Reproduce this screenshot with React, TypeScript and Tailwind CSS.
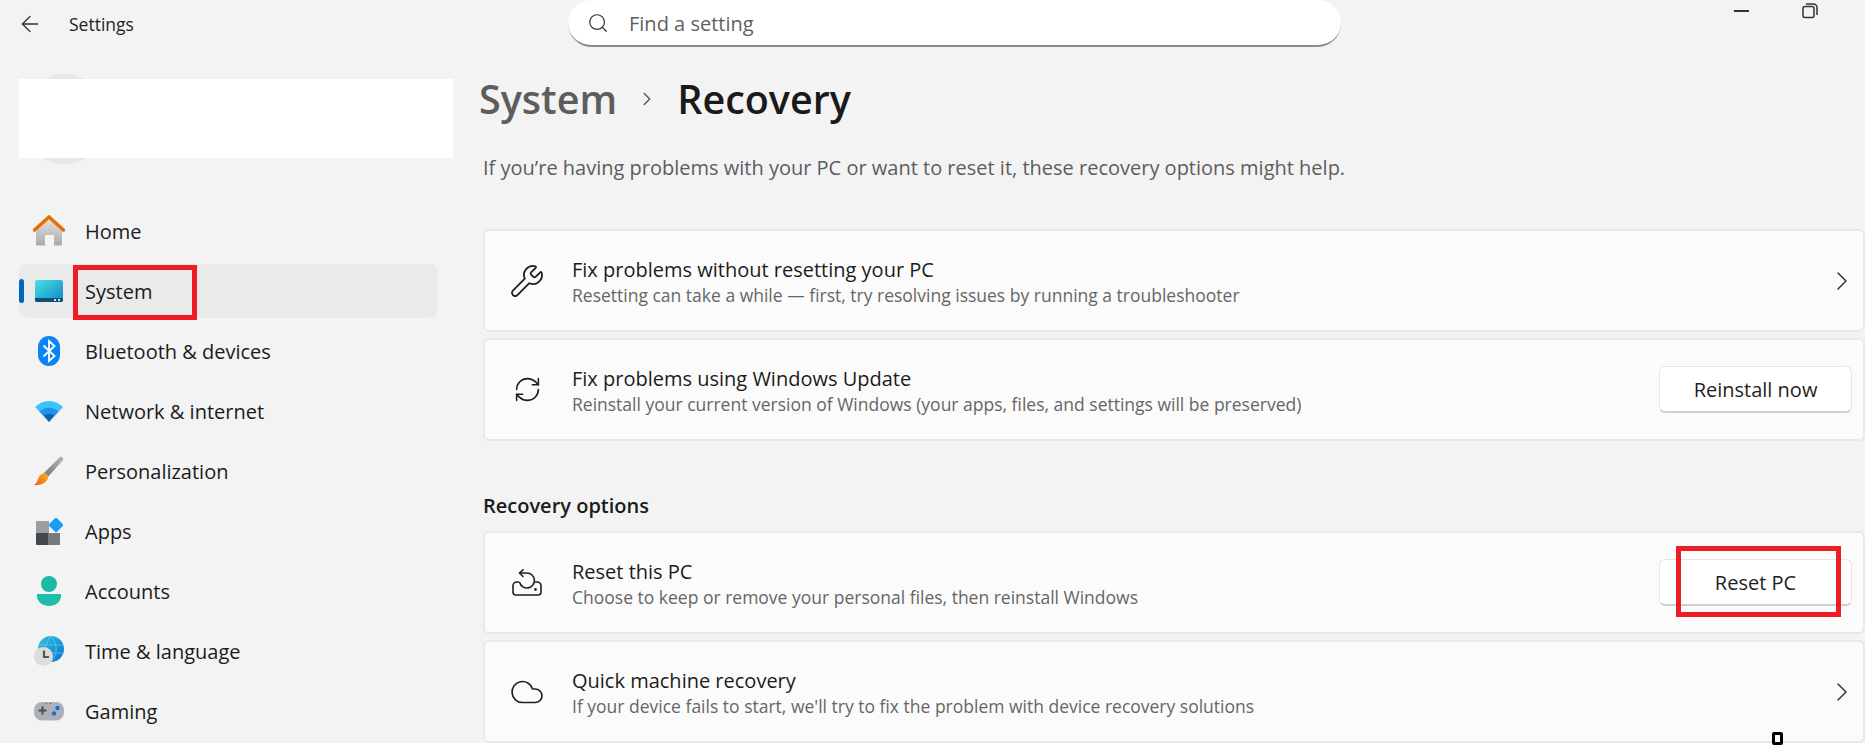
import { ArrowLeft, ChevronRight, Cloud, RefreshCw, Search, Wrench } from 'lucide-react';
import type { ReactNode } from 'react';

function HomeIcon() {
  return (
    <svg width="32" height="32" viewBox="0 0 32 32">
      <defs>
        <linearGradient id="homeWall" x1="0" y1="0" x2="0" y2="1"><stop offset="0" stopColor="#e2e2e2" /><stop offset="1" stopColor="#a9a9a9" /></linearGradient>
      </defs>
      <path d="M3 14 16 4l13 10v15a1.500 1.500 0 0 1-1.500 1.500H21V20h-9v10.500H4.500A1.500 1.500 0 0 1 3 29Z" fill="url(#homeWall)" />
      <path d="M1.500 15 16 2l14.500 13" fill="none" stroke="#e96f00" strokeWidth="3.600" strokeLinejoin="round" strokeLinecap="round" />
    </svg>
  );
}

function SystemIcon() {
  return (
    <svg width="30" height="24" viewBox="0 0 30 24">
      <defs>
        <linearGradient id="sysScreen" x1="0" y1="0" x2="1" y2="1"><stop offset="0" stopColor="#46e3e8" /><stop offset="1" stopColor="#1283c4" /></linearGradient>
      </defs>
      <rect x="1" y="1" width="28" height="22" rx="2" fill="url(#sysScreen)" />
      <path d="M1 19h28v2a2 2 0 0 1-2 2H3a2 2 0 0 1-2-2Z" fill="#0e4f78" />
      <rect x="20" y="20" width="2" height="2" fill="#cde6f2" />
      <rect x="24" y="20" width="2" height="2" fill="#cde6f2" />
    </svg>
  );
}

function BluetoothIcon() {
  return (
    <svg width="22" height="30" viewBox="0 0 22 30">
      <rect x="0" y="0" width="22" height="30" rx="11" fill="#0a84f5" />
      <path d="m5.500 9.500 11 10.500-5.500 5V5l5.500 5-11 10.500" fill="none" stroke="#fff" strokeWidth="1.800" />
    </svg>
  );
}

function WifiIcon() {
  return (
    <svg width="30" height="22" viewBox="0 0 30 22">
      <path d="M1 7C9-1 21-1 29 7L15 22Z" fill="#3cc3fb" />
      <path d="M5.500 11.500c6-5 13-5 19 0L15 22Z" fill="#1e93e6" />
      <path d="M10 15.500c3-2 7-2 10 0L15 21.500Z" fill="#0f5fb0" />
    </svg>
  );
}

function BrushIcon() {
  return (
    <svg width="30" height="30" viewBox="0 0 30 30">
      <defs>
        <linearGradient id="brushHandle" x1="0" y1="1" x2="1" y2="0"><stop offset="0" stopColor="#6d7378" /><stop offset="1" stopColor="#b5b9bd" /></linearGradient>
        <linearGradient id="brushTip" x1="1" y1="0" x2="0" y2="1"><stop offset="0" stopColor="#fbb01c" /><stop offset="1" stopColor="#ee5f12" /></linearGradient>
      </defs>
      <path d="M26 1c2-1 4 1 3 3L13 22l-4-4Z" fill="url(#brushHandle)" />
      <path d="M8 18c3-2 6 0 6 3 0 5-7 9-14 8 3-2 3-4 4-6 1-3 2-4 4-5Z" fill="url(#brushTip)" />
    </svg>
  );
}

function AppsIcon() {
  return (
    <svg width="28" height="28" viewBox="0 0 28 28">
      <path d="M1 5a1 1 0 0 1 1-1h12v12H1Z" fill="#9a9ea3" />
      <path d="M1 16h12v12H2a1 1 0 0 1-1-1Z" fill="#45484b" />
      <path d="M13 16h12v11a1 1 0 0 1-1 1H13Z" fill="#777b80" />
      <rect x="15.500" y="2.500" width="11" height="11" rx="1.500" transform="rotate(45 21 8)" fill="#1c9bf0" />
    </svg>
  );
}

function AccountsIcon() {
  return (
    <svg width="26" height="30" viewBox="0 0 26 30">
      <circle cx="13" cy="8" r="8" fill="#1cb9a5" />
      <path d="M1 18h24v2c0 6-6 10-12 10S1 26 1 20Z" fill="#1fbda9" />
    </svg>
  );
}

function TimeIcon() {
  return (
    <svg width="30" height="30" viewBox="0 0 30 30">
      <defs>
        <linearGradient id="globeFill" x1="0" y1="0" x2="1" y2="1"><stop offset="0" stopColor="#2cc4dc" /><stop offset="1" stopColor="#0d74d1" /></linearGradient>
      </defs>
      <circle cx="17" cy="13" r="13" fill="url(#globeFill)" />
      <path d="M5 9h24M5 17h24M17 0c-7 8-7 18 0 26M17 0c7 8 7 18 0 26" fill="none" stroke="#7fd9ee" strokeWidth="0.800" opacity="0.700" />
      <circle cx="9.500" cy="20.500" r="9.500" fill="#dcdcdc" />
      <path d="M10 14.500v6.500h5" fill="none" stroke="#55585b" strokeWidth="2.200" />
    </svg>
  );
}

function GamingIcon() {
  return (
    <svg width="30" height="20" viewBox="0 0 30 20">
      <rect x="0" y="1" width="30" height="18.500" rx="8" fill="#adb1b7" />
      <path d="M8.500 5.500v8M4.500 9.500h8" stroke="#4b4e52" strokeWidth="2" />
      <circle cx="23.500" cy="7" r="2.200" fill="#0f74dc" />
      <circle cx="20" cy="12.500" r="2.200" fill="#0f74dc" />
      <rect x="12" y="2" width="1" height="1" fill="#55585b" />
      <rect x="16" y="2" width="1" height="1" fill="#55585b" />
    </svg>
  );
}

function ResetIcon() {
  return (
    <svg width="30" height="28" viewBox="0 0 30 28" fill="none" stroke="#1f1f1f" strokeWidth="1.600" strokeLinecap="round" strokeLinejoin="round">
      <path d="M6.500 13H5a4 4 0 0 0-4 4v6a3 3 0 0 0 3 3h22a3 3 0 0 0 3-3v-6a4 4 0 0 0-4-4h-1.500" />
      <path d="M8 4h7a7.500 7.500 0 1 1-7.300 9.500" />
      <path d="M11 0.800 7.500 4l3.500 3.500" />
      <circle cx="23.500" cy="20.500" r="0.600" fill="#1f1f1f" />
    </svg>
  );
}

const NAV_ITEMS: { label: string; icon: ReactNode; active?: boolean }[] = [
  { label: 'Home', icon: <HomeIcon /> },
  { label: 'System', icon: <SystemIcon />, active: true },
  { label: 'Bluetooth & devices', icon: <BluetoothIcon /> },
  { label: 'Network & internet', icon: <WifiIcon /> },
  { label: 'Personalization', icon: <BrushIcon /> },
  { label: 'Apps', icon: <AppsIcon /> },
  { label: 'Accounts', icon: <AccountsIcon /> },
  { label: 'Time & language', icon: <TimeIcon /> },
  { label: 'Gaming', icon: <GamingIcon /> },
];

function Card({ icon, title, desc, action }: { icon: ReactNode; title: string; desc: string; action: ReactNode }) {
  return (
    <div className="flex h-[103px] w-[1382px] items-center rounded-md border-2 border-[#e8e8e8] bg-[#fbfbfb] pr-[11px]">
      <div className="mr-[3px] flex w-[84px] shrink-0 justify-center text-[#1f1f1f]">{icon}</div>
      <div className="min-w-0 flex-1 pt-[2px]">
        <div className="text-[20px] leading-[27px] text-[#1b1b1b]">{title}</div>
        <div className="text-[17.500px] leading-[24px] text-[#666666]">{desc}</div>
      </div>
      {action}
    </div>
  );
}

function CardButton({ children }: { children: ReactNode }) {
  return (
    <button className="h-[47px] w-[193px] rounded-md border border-[#e6e6e6] border-b-[2px] border-b-[#cfcfcf] bg-white pt-[2px] text-[20px] text-[#1f1f1f]">
      {children}
    </button>
  );
}

const chevron = <ChevronRight size={32} strokeWidth={1.100} className="mr-[-6px] text-[#333333]" />;

export default function App() {
  return (
    <div className="relative h-[747px] w-[1865px] overflow-hidden bg-white font-['Open_Sans','Noto_Sans',sans-serif]">
      <div className="flex h-[743px] flex-col bg-[#f3f3f3]">
        {/* title bar */}
        <div className="relative flex h-[48px] shrink-0">
          <div className="flex w-[568px] shrink-0 items-center pl-[17px]">
            <ArrowLeft size={26} strokeWidth={1.200} className="text-[#333333]" />
            <span className="ml-[26px] text-[17.500px] text-[#1f1f1f]">Settings</span>
          </div>
          <div className="flex h-[47px] w-[773px] items-center rounded-full border-b-[2px] border-b-[#8a8a8a] bg-white pl-[19px]">
            <Search size={22} strokeWidth={1.300} className="text-[#333333]" />
            <span className="mt-[2px] ml-[20px] text-[20px] text-[#5f5f5f]">Find a setting</span>
          </div>
          <div className="ml-auto flex items-start pt-[3px] pr-[47px]">
            <div className="mt-[7px] h-[2px] w-[15px] bg-[#333333]" />
            <svg width="16" height="16" viewBox="0 0 16 16" fill="none" stroke="#333333" strokeWidth="1.500" className="ml-[53px]">
              <rect x="1" y="3.500" width="11" height="11" rx="2" />
              <path d="M4 1h7.500A3.500 3.500 0 0 1 15 4.500V12" />
            </svg>
          </div>
        </div>

        <div className="flex min-h-0 flex-1">
          {/* sidebar */}
          <aside className="relative w-[479px] shrink-0 pl-[19px]">
            <div className="absolute top-[26px] left-[20px] h-[90px] w-[90px] rounded-full bg-[#e8e8e8]" />
            <div className="absolute top-[31px] left-[19px] h-[79px] w-[434px] bg-white" />
            <nav className="flex w-[419px] flex-col gap-[6px] pt-[156px]">
              {NAV_ITEMS.map((item) => (
                <div
                  key={item.label}
                  className={`relative flex h-[54px] items-center rounded-lg ${item.active ? 'bg-[#eaeaea]' : ''}`}
                >
                  {item.active && <div className="absolute top-[15px] left-0 h-[24px] w-[5px] rounded-full bg-[#0067c0]" />}
                  <div className="mr-[6px] flex w-[60px] shrink-0 justify-center">{item.icon}</div>
                  <span className="mt-[2px] text-[20px] text-[#1b1b1b]">{item.label}</span>
                </div>
              ))}
            </nav>
            {/* annotation around the System entry */}
            <div className="absolute top-[217px] left-[73px] h-[55px] w-[124px] border-[5px] border-[#ee1c25]" />
          </aside>

          {/* main */}
          <main className="relative min-w-0 flex-1 overflow-hidden">
            <div className="flex items-center pt-[23px] text-[39.500px] leading-[56px] font-semibold">
              <span className="text-[#5d5d5d]">System</span>
              <ChevronRight size={22} strokeWidth={1.500} className="mx-[19px] text-[#555555]" />
              <span className="text-[#1a1a1a]">Recovery</span>
            </div>
            <div className="pl-[4px]">
              <p className="mt-[27px] text-[20px] leading-[28px] text-[#5d5d5d]">
                If you’re having problems with your PC or want to reset it, these recovery options might help.
              </p>
              <div className="mt-[47px] flex flex-col gap-[6px]">
                <Card
                  icon={<Wrench size={36} strokeWidth={1.200} />}
                  title="Fix problems without resetting your PC"
                  desc="Resetting can take a while — first, try resolving issues by running a troubleshooter"
                  action={chevron}
                />
                <Card
                  icon={<RefreshCw size={29} strokeWidth={1.300} />}
                  title="Fix problems using Windows Update"
                  desc="Reinstall your current version of Windows (your apps, files, and settings will be preserved)"
                  action={<CardButton>Reinstall now</CardButton>}
                />
              </div>
              <h2 className="mt-[51px] mb-[11px] text-[20px] leading-[28px] font-semibold text-[#1b1b1b]">Recovery options</h2>
              <div className="flex flex-col gap-[6px]">
                <Card
                  icon={<ResetIcon />}
                  title="Reset this PC"
                  desc="Choose to keep or remove your personal files, then reinstall Windows"
                  action={<CardButton>Reset PC</CardButton>}
                />
                <Card
                  icon={<Cloud size={36} strokeWidth={1.100} />}
                  title="Quick machine recovery"
                  desc="If your device fails to start, we'll try to fix the problem with device recovery solutions"
                  action={chevron}
                />
              </div>
            </div>
            {/* annotation around the Reset PC button */}
            <div className="absolute top-[498px] left-[1197px] h-[71px] w-[165px] border-[5px] border-[#ee1c25]" />
          </main>
        </div>
      </div>
      <div className="absolute top-[732px] left-[1772px] h-[13px] w-[11px] rounded-[2px] border-[3px] border-black bg-white" />
    </div>
  );
}
